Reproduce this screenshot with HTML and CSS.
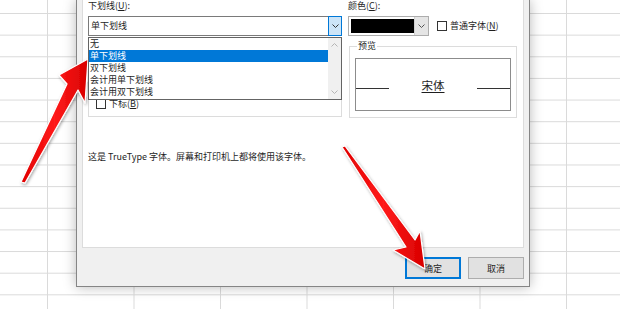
FILE: index.html
```html
<html>
<head>
    <title>字体</title>
    <meta charset="UTF-8">
    <link rel="stylesheet" href="styles.css">
</head>
<body>

<div class="dialog">
    <div class="panel">
        <div class="top_row">

            <div class="left_col">
                <div class="field_label">下划线(<u>U</u>):</div>
                <div class="combo">
                    <div class="combo_text">单下划线</div>
                    <div class="combo_btn combo_btn_open">
                        <svg width="7" height="4" viewBox="0 0 7 4"><path d="M0.5 0.5 L3.5 3.5 L6.5 0.5" fill="none" stroke="#333" stroke-width="1"/></svg>
                    </div>

                    <div class="drop_list">
                        <div class="drop_items">
                            <div class="drop_item">无</div>
                            <div class="drop_item selected">单下划线</div>
                            <div class="drop_item">双下划线</div>
                            <div class="drop_item">会计用单下划线</div>
                            <div class="drop_item">会计用双下划线</div>
                        </div>
                        <div class="drop_scroll">
                            <svg width="7" height="4" viewBox="0 0 7 4"><path d="M0.5 3.5 L3.5 0.5 L6.5 3.5" fill="none" stroke="#b4b4b4" stroke-width="1"/></svg>
                            <svg width="7" height="4" viewBox="0 0 7 4"><path d="M0.5 0.5 L3.5 3.5 L6.5 0.5" fill="none" stroke="#b4b4b4" stroke-width="1"/></svg>
                        </div>
                    </div>
                </div>

                <div class="group effects">
                    <div class="check_row"><span class="check_box"></span>下标(<u>B</u>)</div>
                </div>
            </div>

            <div class="right_col">
                <div class="field_label">颜色(<u>C</u>):</div>
                <div class="color_row">
                    <div class="color_combo">
                        <div class="color_swatch"></div>
                        <div class="color_btn">
                            <svg width="7" height="4" viewBox="0 0 7 4"><path d="M0.5 0.5 L3.5 3.5 L6.5 0.5" fill="none" stroke="#555" stroke-width="1"/></svg>
                        </div>
                    </div>
                    <div class="check_row normal_font"><span class="check_box"></span>普通字体(<u>N</u>)</div>
                </div>

                <fieldset class="group preview">
                    <legend>预览</legend>
                    <div class="preview_box">
                        <span class="preview_line"></span>
                        <span class="preview_text">宋体</span>
                        <span class="preview_line"></span>
                    </div>
                </fieldset>
            </div>

        </div>

        <div class="info_text">这是 TrueType 字体。屏幕和打印机上都将使用该字体。</div>
    </div>

    <div class="dialog_buttons">
        <button type="button" class="dialog_btn default_btn">确定</button>
        <button type="button" class="dialog_btn">取消</button>
    </div>
</div>

<!-- red arrows drawn over the screenshot -->
<svg class="arrows" width="620" height="309" viewBox="0 0 620 309">
    <defs>
        <linearGradient id="red_fill" x1="0" y1="0" x2="1" y2="0">
            <stop offset="0" stop-color="#e00000"/>
            <stop offset="0.5" stop-color="#ff1a1a"/>
            <stop offset="1" stop-color="#d80000"/>
        </linearGradient>
        <filter id="arrow_shadow" x="-20%" y="-20%" width="140%" height="140%">
            <feDropShadow dx="1" dy="1.5" stdDeviation="1.5" flood-color="#000" flood-opacity="0.35"/>
        </filter>
    </defs>
    <polygon points="21,182 67,84 59,75 88,59 85,103 78,90 25,183" fill="url(#red_fill)" stroke="#fff" stroke-width="1.2" stroke-linejoin="round" filter="url(#arrow_shadow)"/>
    <polygon points="342,147 406,247 393,250 425,269 420,231 415,240 345,146" fill="url(#red_fill)" stroke="#fff" stroke-width="1.2" stroke-linejoin="round" filter="url(#arrow_shadow)"/>
</svg>

</body>
</html>
```

FILE: styles.css
```css
body{
    margin: 0;
    width: 620px;
    height: 309px;
    overflow: hidden;
    position: relative;
    font-family: "Noto Sans CJK SC", "Noto Sans", sans-serif;
    font-size: 9px;
    color: #1e1e1e;
    background-color: white;
    background-image:
        linear-gradient(to right, #dadada 1px, transparent 1px),
        linear-gradient(to bottom, #dadada 1px, transparent 1px);
    background-size: 86.5px 100%, 100% 21.65px;
    background-position: 47px 0, 0 13px;
}

u{
    text-decoration-thickness: 1px;
    text-underline-offset: 1px;
}

/* dialog */

.dialog{
    box-sizing: border-box;
    margin-left: 76px;
    width: 454px;
    height: 287px;
    background-color: #f0f0f0;
    border: 1px solid #858585;
    border-top: none;
    box-shadow: 0 0 12px rgba(0, 0, 0, 0.28);
    display: flex;
    flex-direction: column;
}

.panel{
    box-sizing: border-box;
    margin: 0 5px;
    height: 248px;
    padding: 0 5px;
    background-color: white;
    border: 1px solid #dcdcdc;
    border-top: none;
}

.top_row{
    display: flex;
    gap: 6px;
}

.left_col{
    width: 254px;
}

.right_col{
    width: 169px;
}

.field_label{
    height: 12px;
    line-height: 12px;
    margin-bottom: 4px;
}

/* underline combo */

.combo{
    position: relative;
    box-sizing: border-box;
    height: 20px;
    border: 1px solid #7a7a7a;
    display: flex;
    align-items: center;
}

.combo_text{
    flex: 1;
    padding-left: 2px;
    line-height: 12px;
}

.combo_btn{
    box-sizing: border-box;
    width: 14px;
    height: 20px;
    margin-right: -1px;
    display: flex;
    align-items: center;
    justify-content: center;
}

.combo_btn_open{
    background-color: #cce4f7;
    border: 1px solid #0078d7;
}

.drop_list{
    position: absolute;
    top: 20px;
    left: -1px;
    box-sizing: border-box;
    width: 254px;
    height: 63px;
    background-color: white;
    border: 1px solid #646464;
    display: flex;
    z-index: 2;
}

.drop_items{
    flex: 1;
}

.drop_item{
    height: 12px;
    line-height: 12px;
    padding-left: 1px;
}

.drop_item.selected{
    background-color: #0078d7;
    color: white;
}

.drop_scroll{
    width: 13px;
    background-color: #f0f0f0;
    display: flex;
    flex-direction: column;
    justify-content: space-between;
    align-items: center;
    padding: 5px 0;
}

/* group boxes */

.group{
    margin: 0;
    border: 1px solid #dcdcdc;
    box-sizing: border-box;
}

.group legend{
    padding: 0 1px;
    margin-left: 2px;
    line-height: 12px;
}

.effects{
    margin-top: 8px;
    height: 73px;
    padding: 0 0 5px 7px;
    display: flex;
    flex-direction: column;
    justify-content: flex-end;
}

.check_row{
    height: 14px;
    line-height: 14px;
    display: flex;
    align-items: center;
}

.check_box{
    box-sizing: border-box;
    width: 10px;
    height: 10px;
    border: 1px solid #333;
    background-color: white;
    margin-right: 3px;
}

/* colour */

.color_row{
    display: flex;
    align-items: center;
}

.color_combo{
    box-sizing: border-box;
    width: 81px;
    height: 20px;
    border: 1px solid #adadad;
    background-color: white;
    display: flex;
    padding: 2px 0 2px 2px;
}

.color_swatch{
    flex: 1;
    background-color: black;
}

.color_btn{
    width: 13px;
    margin: -2px 0;
    background-color: #e5e5e5;
    border-left: 1px solid #d0d0d0;
    display: flex;
    align-items: center;
    justify-content: center;
}

.normal_font{
    margin-left: 8px;
}

.preview{
    margin: 4px 0 0 1px;
    width: 168px;
    height: 78px;
    padding: 6px 5px 0 5px;
}

.preview_box{
    box-sizing: border-box;
    height: 53px;
    border: 1px solid #8c8c8c;
    display: flex;
    align-items: center;
}

.preview_line{
    width: 33px;
    height: 1px;
    margin-top: 8px;
    background-color: #333;
}

.preview_text{
    flex: 1;
    text-align: center;
    font-size: 11.5px;
    line-height: 14px;
    text-decoration: underline;
    text-decoration-thickness: 1px;
    text-underline-offset: 2px;
}

.info_text{
    margin-top: 33px;
    line-height: 12px;
}

/* buttons */

.dialog_buttons{
    display: flex;
    justify-content: flex-end;
    gap: 7px;
    padding: 9px 5px 0 0;
}

.dialog_btn{
    box-sizing: border-box;
    width: 56px;
    height: 22px;
    padding: 0;
    font-family: inherit;
    font-size: 9px;
    color: #1e1e1e;
    background-color: #e1e1e1;
    border: 1px solid #adadad;
    outline: none;
}

.default_btn{
    border: 2px solid #0078d7;
}

.arrows{
    position: absolute;
    top: 0;
    left: 0;
    pointer-events: none;
}
```
